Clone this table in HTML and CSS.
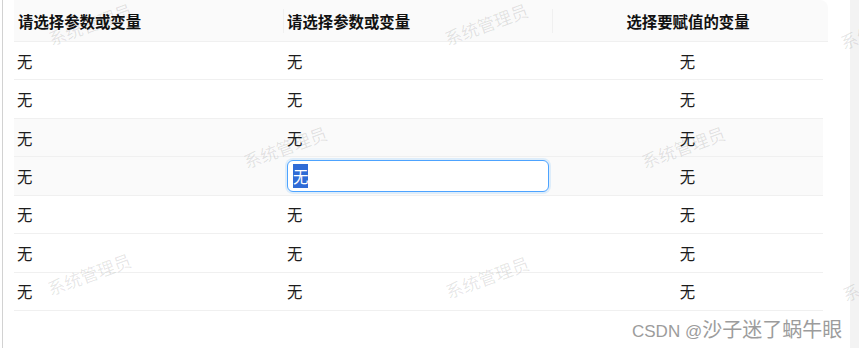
FILE: index.html
```html
<!DOCTYPE html>
<html lang="zh-CN">
<head>
    <meta charset="UTF-8">
    <meta name="viewport" content="width=device-width, initial-scale=1.0">
    <title>变量赋值</title>
    <link rel="stylesheet" href="styles.css">
</head>
<body>
    <div class="page">
        <div class="frame">
            <div class="thead">
                <div class="th th-1">请选择参数或变量</div>
                <div class="th th-2">请选择参数或变量</div>
                <div class="th th-3">选择要赋值的变量</div>
                <div></div>
            </div>
            <div class="tbody">
                <div class="tr">
                    <div class="td td-1">无</div>
                    <div class="td td-2">无</div>
                    <div class="td td-3">无</div>
                </div>
                <div class="tr">
                    <div class="td td-1">无</div>
                    <div class="td td-2">无</div>
                    <div class="td td-3">无</div>
                </div>
                <div class="tr tr-hl">
                    <div class="td td-1">无</div>
                    <div class="td td-2">无</div>
                    <div class="td td-3">无</div>
                </div>
                <div class="tr tr-hl">
                    <div class="td td-1">无</div>
                    <div class="td td-2">
                        <div class="cell-input"><span class="sel">无</span></div>
                    </div>
                    <div class="td td-3">无</div>
                </div>
                <div class="tr">
                    <div class="td td-1">无</div>
                    <div class="td td-2">无</div>
                    <div class="td td-3">无</div>
                </div>
                <div class="tr">
                    <div class="td td-1">无</div>
                    <div class="td td-2">无</div>
                    <div class="td td-3">无</div>
                </div>
                <div class="tr">
                    <div class="td td-1">无</div>
                    <div class="td td-2">无</div>
                    <div class="td td-3">无</div>
                </div>
            </div>
        </div>
        <div class="track"></div>

        <!-- watermark layer -->
        <div class="watermarks">
            <span class="wm wm-1">系统管理员</span>
            <span class="wm wm-2">系统管理员</span>
            <span class="wm wm-3">系统管理员</span>
            <span class="wm wm-4">系统管理员</span>
            <span class="wm wm-5">系统管理员</span>
            <span class="wm wm-6">系统管理员</span>
            <span class="wm wm-7">系统管理员</span>
            <span class="wm wm-8">系统管理员</span>
        </div>
        <div class="csdn"><span class="csdn-latin">CSDN @</span><span class="csdn-cjk">沙子迷了蜗牛眼</span></div>
    </div>
</body>
</html>
```

FILE: styles.css
```css
body {
    margin: 0;
    background: #fff;
    color: #1c1c1c;
    font-family: "Noto Sans CJK SC", "Noto Sans", sans-serif;
    font-size: 15.4px;
}
.page {
    position: relative;
    display: flex;
    height: 348px;
    overflow: hidden;
}
.frame {
    width: 848px;
    margin-left: 2px;
    padding-left: 11px;
    border-left: 1px solid #d2d2d2;
    box-sizing: border-box;
}
.track {
    width: 9px;
    background: #f3f3f3;
}
.thead {
    display: grid;
    grid-template-columns: 269px 269px 271px 5px;
    align-items: center;
    width: 814px;
    height: 42px;
    background: #fafafa;
    border-bottom: 1px solid #f0f0f0;
    border-top-right-radius: 8px;
    box-sizing: border-box;
}
.th {
    font-weight: bold;
    color: #111;
    line-height: 24px;
}
.th-1 {
    padding-left: 4px;
}
.th-2 {
    padding-left: 3px;
    border-left: 1px solid #f0f0f0;
}
.th-3 {
    border-left: 1px solid #f0f0f0;
    text-align: center;
}
.tbody {
    width: 809px;
}
.tr {
    display: grid;
    grid-template-columns: 269px 269px 271px;
    align-items: center;
    height: 38.43px;
    border-bottom: 1px solid #f0f0f0;
    box-sizing: border-box;
}
.tr-hl {
    background: #fafafa;
}
.td-1 {
    padding-left: 3px;
}
.td-2 {
    padding-left: 4px;
}
.td-3 {
    text-align: center;
}
.cell-input {
    display: flex;
    align-items: center;
    width: 262px;
    height: 32px;
    padding-left: 5px;
    background: #fff;
    border: 1px solid #4da3ff;
    border-radius: 6px;
    box-shadow: 0 0 0 2px rgba(24, 144, 255, 0.12);
    box-sizing: border-box;
}
.sel {
    background: #2f6bd6;
    color: #fff;
    line-height: 24px;
}
.watermarks {
    position: absolute;
    inset: 0;
    pointer-events: none;
}
.wm {
    position: absolute;
    font-size: 17.5px;
    color: rgba(0, 0, 0, 0.1);
    white-space: nowrap;
    transform: translate(-50%, -50%) rotate(-20deg);
}
.wm-1 { left: 90px; top: 24px; }
.wm-2 { left: 486px; top: 24px; }
.wm-3 { left: 882px; top: 28px; }
.wm-4 { left: 285px; top: 147px; }
.wm-5 { left: 683px; top: 147px; }
.wm-6 { left: 89px; top: 274px; }
.wm-7 { left: 487px; top: 277px; }
.wm-8 { left: 884px; top: 280px; }
.csdn {
    position: absolute;
    left: 632px;
    top: 315px;
    color: #9c9c9c;
    text-shadow: 0 0 1px #fff, 0 0 1px #fff;
    white-space: nowrap;
    line-height: 28px;
}
.csdn-latin {
    font-family: "Liberation Sans", sans-serif;
    font-size: 17px;
}
.csdn-cjk {
    font-size: 20px;
}
```
